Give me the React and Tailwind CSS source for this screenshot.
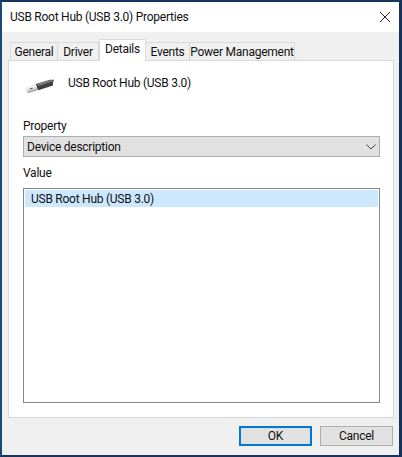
import React from 'react';

const tabs = [
  { label: 'General', width: 'w-[48px]' },
  { label: 'Driver', width: 'w-[41px]' },
  { label: 'Details', width: 'w-[47px]', active: true },
  { label: 'Events', width: 'w-[44px]' },
  { label: 'Power Management', width: 'w-[105px]' },
];

const UsbIcon = () => (
  <svg width="30" height="16" viewBox="0 0 30 16" className="block">
    <path d="M11 6 L26 1.5 L28 2.5 L28 7.5 L14 12 L12 12 Z" fill="#3f3f41" />
    <path d="M12 6 L26 2 L28 3 L14 8 Z" fill="#808083" />
    <path d="M27 2 L29 1.5 L29 3 L28 4.5 Z" fill="#777" />
    <path d="M0.5 10 L11 6.5 L13 12 L2.5 15 Z" fill="#d2d2d4" />
    <path d="M0.5 10 L11 7 L11.5 9 L1.5 12 Z" fill="#f4f4f4" />
    <path d="M2.5 14 L13 11 L13 12 L3 15 Z" fill="#949497" />
    <rect x="4.5" y="10" width="3" height="1.2" fill="#666" transform="rotate(-15 6 10)" />
  </svg>
);

export default function App() {
  return (
    <div className="w-[402px] h-[457px] flex flex-col bg-[#f0f0f0] border-t-2 border-b-2 border-l-2 border-r-[3px] border-t-[#16365f] border-b-[#16365f] border-l-[#1a4a72] border-r-[#16305c] font-['Roboto',sans-serif] text-[12px] leading-[16px] tracking-[-0.25px] text-[#111] overflow-hidden">
      <div className="h-[30px] shrink-0 bg-white flex items-center justify-between pl-[8px] pr-[8px]">
        <span>USB Root Hub (USB 3.0) Properties</span>
        <svg width="12" height="12" viewBox="0 0 12 12" className="block">
          <path d="M1 1 L11 11 M11 1 L1 11" stroke="#222" strokeWidth="1" fill="none" />
        </svg>
      </div>

      <div className="flex-1 flex flex-col pl-[6px] pr-[5px]">
        <div className="h-[28px] shrink-0 flex items-end pl-[2px] relative z-10">
          {tabs.map((tab) => (
            <div
              key={tab.label}
              className={
                tab.active
                  ? `${tab.width} h-[22px] -mb-px bg-white border border-b-0 border-[#d9d9d9] flex items-start pt-[1px] justify-center`
                  : `${tab.width} h-[18px] bg-[#f0f0f0] border border-b-0 border-l-0 first:border-l border-[#d9d9d9] flex items-center justify-center whitespace-nowrap`
              }
            >
              {tab.label}
            </div>
          ))}
        </div>

        <div className="h-[358px] shrink-0 bg-white border border-[#d9d9d9] pl-[14px] pr-[13px] flex flex-col">
          <div className="flex items-start h-[54px] pt-[14px]">
            <div className="w-[45px] pt-[3px] pl-[2px]">
              <UsbIcon />
            </div>
            <span>USB Root Hub (USB 3.0)</span>
          </div>

          <div className="h-[13px] mt-[4px] flex items-center">Property</div>
          <div className="mt-[4px] h-[21px] bg-[#e1e1e1] border border-[#adadad] flex items-center justify-between pl-[3px] pr-[3px]">
            <span>Device description</span>
            <svg width="10" height="6" viewBox="0 0 10 6" className="block">
              <path d="M0.5 0.5 L5 5 L9.5 0.5" stroke="#444" strokeWidth="1" fill="none" />
            </svg>
          </div>

          <div className="h-[13px] mt-[9px] flex items-center">Value</div>
          <div className="mt-[9px] h-[215px] border border-[#828790] bg-white p-px">
            <div className="h-[17px] bg-[#cce8ff] pl-[6px] flex items-center">USB Root Hub (USB 3.0)</div>
          </div>
        </div>

        <div className="flex justify-end gap-[8px] mt-[8px] pr-px">
          <button className="w-[73px] h-[20px] bg-[#e1e1e1] border-2 border-[#0078d7] flex items-center justify-center">OK</button>
          <button className="w-[73px] h-[20px] bg-[#e1e1e1] border border-[#adadad] flex items-center justify-center">Cancel</button>
        </div>
      </div>
    </div>
  );
}
